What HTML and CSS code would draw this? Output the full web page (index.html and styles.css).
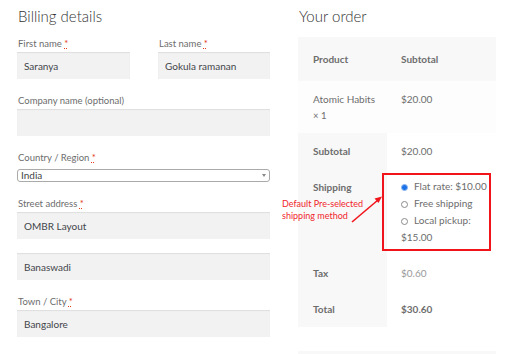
FILE: index.html
```html
<!DOCTYPE html>
<html lang="en">

<head>
	<meta charset="UTF-8">
	<title>Checkout</title>
	<link rel="stylesheet" href="styles.css">
</head>

<body>
	<div class="checkout">
		<section class="billing">
			<h3>Billing details</h3>
			<div class="pair">
				<p class="form-row">
					<label>First name <abbr class="required" title="required">*</abbr></label>
					<input type="text" value="Saranya" readonly>
				</p>
				<p class="form-row">
					<label>Last name <abbr class="required" title="required">*</abbr></label>
					<input type="text" value="Gokula ramanan" readonly>
				</p>
			</div>
			<p class="form-row">
				<label>Company name (optional)</label>
				<input type="text" value="" readonly>
			</p>
			<p class="form-row">
				<label>Country / Region <abbr class="required" title="required">*</abbr></label>
				<span class="select">India<span class="select-arrow"></span></span>
			</p>
			<p class="form-row">
				<label>Street address <abbr class="required" title="required">*</abbr></label>
				<input type="text" value="OMBR Layout" readonly>
				<input class="second" type="text" value="Banaswadi" readonly>
			</p>
			<p class="form-row">
				<label>Town / City <abbr class="required" title="required">*</abbr></label>
				<input type="text" value="Bangalore" readonly>
			</p>
		</section>

		<section class="order">
			<h3>Your order</h3>
			<table class="order-table">
				<thead>
					<tr>
						<th>Product</th>
						<th>Subtotal</th>
					</tr>
				</thead>
				<tbody>
					<tr>
						<td>Atomic Habits<br><span class="qty">&times; 1</span></td>
						<td>$20.00</td>
					</tr>
				</tbody>
				<tfoot>
					<tr>
						<th>Subtotal</th>
						<td>$20.00</td>
					</tr>
					<tr class="shipping">
						<th>Shipping</th>
						<td>
							<ul class="methods">
								<li><span class="radio checked"></span>Flat rate: $10.00</li>
								<li><span class="radio"></span>Free shipping</li>
								<li><span class="radio"></span>Local pickup: $15.00</li>
							</ul>
						</td>
					</tr>
					<tr class="tax">
						<th>Tax</th>
						<td>$0.60</td>
					</tr>
					<tr class="total">
						<th>Total</th>
						<td>$30.60</td>
					</tr>
				</tfoot>
			</table>
			<div class="payment"></div>

			<!-- annotation drawn over the screenshot -->
			<div class="callout-box"></div>
			<p class="callout-text">Default Pre-selected<br>shipping method</p>
			<svg class="callout-arrow" width="40" height="36" viewBox="0 0 40 36">
				<line x1="4" y1="30" x2="30" y2="8" stroke="#f0141c" stroke-width="1.6"/>
				<polygon points="34,4.5 30.5,11 26.5,6.5" fill="#f0141c"/>
			</svg>
		</section>
	</div>
</body>

</html>
```

FILE: styles.css
```css
body {
	margin: 0;
	padding: 0;
	font-family: Lato, "Liberation Sans", sans-serif;
	font-size: 10px;
	color: #6d6d6d;
	background-color: #fff;
	overflow: hidden;
}
.checkout {
	display: grid;
	grid-template-columns: 253px 198px;
	column-gap: 28px;
	padding-left: 17px;
}
h3 {
	margin: 6px 0 11px 1px;
	font-size: 15px;
	font-weight: 300;
	line-height: 20px;
	color: #333;
}
.pair {
	display: grid;
	grid-template-columns: 113px 112px;
	column-gap: 28px;
}
.form-row {
	margin: 0 0 15px;
}
.form-row label {
	display: block;
	padding-left: 1px;
	margin-bottom: 1px;
	line-height: 14px;
	font-size: 9.5px;
}
.required {
	color: #e2401c;
	text-decoration: underline dotted;
}
.form-row input {
	display: block;
	box-sizing: border-box;
	width: 100%;
	height: 27px;
	margin: 0;
	padding: 0 7px;
	border: 0;
	outline: none;
	background-color: #f2f2f2;
	box-shadow: inset 0 1px 1px rgba(0, 0, 0, 0.08);
	font-family: inherit;
	font-size: 10px;
	color: #43454b;
}
.form-row input.second {
	margin-top: 14px;
}
.select {
	position: relative;
	display: block;
	box-sizing: border-box;
	height: 13px;
	margin-top: 4px;
	padding-left: 3px;
	border: 1px solid #aaa;
	border-radius: 3px;
	line-height: 11px;
	font-size: 10px;
	color: #444;
}
.select-arrow {
	position: absolute;
	right: 3px;
	top: 4px;
	border-left: 2px solid transparent;
	border-right: 2px solid transparent;
	border-top: 3px solid #888;
}

/* order review */
.order {
	position: relative;
}
.order-table {
	width: 198px;
	border-collapse: collapse;
	table-layout: fixed;
}
.order-table th,
.order-table td {
	padding: 11.5px 6px 11.5px 15px;
	line-height: 13px;
	text-align: left;
	vertical-align: top;
}
.order-table th:first-child,
.order-table td:first-child {
	width: 89px;
	box-sizing: border-box;
}
.order-table th:last-child,
.order-table td:last-child {
	padding-left: 14px;
}
.order-table th {
	font-weight: 700;
	color: #6d6d6d;
}
.order-table thead th {
	padding-top: 15px;
	padding-bottom: 15px;
	line-height: 14px;
	background-color: #f8f8f8;
}
.order-table tbody td {
	padding-top: 10px;
	padding-bottom: 9px;
	line-height: 16px;
	background-color: #fdfdfd;
}
.qty {
	font-size: 9.5px;
}
.order-table tfoot th {
	background-color: #f8f8f8;
}
.order-table .shipping td {
	padding-top: 9px;
	padding-bottom: 9px;
	padding-right: 2px;
}
.order-table .tax td {
	color: #999;
}
.order-table .total td {
	font-weight: 700;
}
.methods {
	margin: 0;
	padding: 0;
	list-style: none;
	line-height: 17px;
}
.radio {
	display: inline-block;
	box-sizing: border-box;
	width: 7px;
	height: 7px;
	margin: 0 6px 0 0;
	border: 1px solid #8a8a8a;
	border-radius: 50%;
	vertical-align: -0.5px;
}
.radio.checked {
	border-color: #8fb6f0;
	background-color: #1a73e8;
}
.payment {
	height: 20px;
	margin-top: 24px;
	background-color: #f8f8f8;
}
.callout-box {
	position: absolute;
	left: 84px;
	top: 173px;
	width: 109px;
	height: 78px;
	box-sizing: border-box;
	border: 2px solid #f0141c;
}
.callout-text {
	position: absolute;
	left: -16px;
	top: 198px;
	margin: 0;
	font-size: 9px;
	line-height: 12px;
	color: #f0262c;
	white-space: nowrap;
}
.callout-arrow {
	position: absolute;
	left: 50px;
	top: 192px;
}
```
